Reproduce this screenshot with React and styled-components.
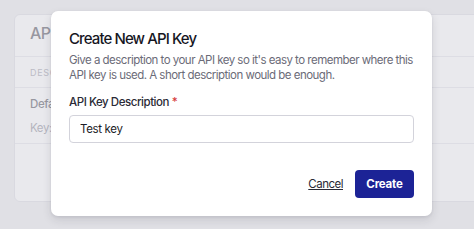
import React from 'react'
import styled, { createGlobalStyle } from 'styled-components'

const GlobalStyle = createGlobalStyle`
  html, body {
    margin: 0;
    padding: 0;
    font-family: Inter, "Noto Sans", sans-serif;
  }
  * { box-sizing: border-box; }
`

const App = () => {
  return (
    <Page>
      <GlobalStyle />
      <Card>
        <CardTitle>API Keys</CardTitle>
        <TableHead>Description</TableHead>
        <TableRow>
          <RowName>Default</RowName>
          <RowKey>Key: sk_live_••••••••</RowKey>
        </TableRow>
      </Card>
      <Overlay>
        <Modal>
          <ModalTitle>Create New API Key</ModalTitle>
          <ModalText>
            Give a description to your API key so it's easy to remember where this
            API key is used. A short description would be enough.
          </ModalText>
          <Label>
            API Key Description <Required>*</Required>
          </Label>
          <Input defaultValue="Test key" />
          <Footer>
            <LinkButton>Cancel</LinkButton>
            <PrimaryButton>Create</PrimaryButton>
          </Footer>
        </Modal>
      </Overlay>
    </Page>
  )
}

const Page = styled.div`
  position: relative;
  width: 100vw;
  height: 100vh;
  overflow: hidden;
  background-color: #ebebee;
  padding: 14px 0 0 14px;
`

const Card = styled.div`
  width: 480px;
  height: 188px;
  background-color: #fff;
  border: 1px solid #dcdce2;
  border-radius: 6px;
  color: #4b4b55;
`

const CardTitle = styled.div`
  padding: 8px 15px 0;
  height: 41px;
  font-size: 16px;
  line-height: 20px;
  font-weight: 500;
  letter-spacing: -0.5px;
`

const TableHead = styled.div`
  height: 32px;
  padding: 0 15px;
  display: flex;
  align-items: center;
  border-top: 1px solid #e4e4ea;
  border-bottom: 1px solid #e4e4ea;
  font-size: 9px;
  letter-spacing: 0.08em;
  text-transform: uppercase;
  color: #9a9aa6;
`

const TableRow = styled.div`
  height: 56px;
  padding: 8px 15px 0;
  border-bottom: 1px solid #e4e4ea;
  display: flex;
  flex-direction: column;
  gap: 8px;
  font-size: 11.5px;
  line-height: 16px;
  letter-spacing: -0.4px;
`

const RowName = styled.div`
  font-weight: 500;
`

const RowKey = styled.div`
  color: #8a8a96;
`

const Overlay = styled.div`
  position: absolute;
  inset: 0;
  background-color: rgba(215, 215, 222, 0.55);
  display: flex;
  align-items: flex-start;
  padding: 11px 0 0 51px;
`

const Modal = styled.div`
  width: 381px;
  background-color: #fff;
  border-radius: 7px;
  padding: 18px;
  box-shadow: 0 4px 10px rgba(30, 30, 50, 0.12), 0 1px 3px rgba(30, 30, 50, 0.08);
  display: flex;
  flex-direction: column;
`

const ModalTitle = styled.h2`
  margin: 0;
  font-size: 15px;
  line-height: 20px;
  font-weight: 500;
  letter-spacing: -0.9px;
  color: #16161f;
`

const ModalText = styled.p`
  margin: 4px 0 0;
  font-size: 11.5px;
  line-height: 14.5px;
  letter-spacing: -0.52px;
  color: #6b6b78;
`

const Label = styled.label`
  margin-top: 12px;
  font-size: 11.5px;
  line-height: 16px;
  font-weight: 500;
  letter-spacing: -0.45px;
  color: #2a2a36;
`

const Required = styled.span`
  color: #d63a3a;
`

const Input = styled.input`
  margin-top: 5px;
  height: 28px;
  width: 100%;
  padding: 0 10px;
  border: 1px solid #d3d3db;
  border-radius: 4px;
  font-family: inherit;
  font-size: 11.5px;
  letter-spacing: -0.35px;
  color: #1c1c26;
  outline: none;
`

const Footer = styled.div`
  margin-top: 27px;
  display: flex;
  justify-content: flex-end;
  align-items: center;
  gap: 12px;
`

const LinkButton = styled.button`
  border: none;
  background: none;
  padding: 0;
  font-family: inherit;
  font-size: 11.5px;
  letter-spacing: -0.5px;
  color: #2a2a36;
  text-decoration: underline;
  cursor: pointer;
`

const PrimaryButton = styled.button`
  height: 28px;
  width: 59px;
  border: none;
  border-radius: 4px;
  background-color: #1c2396;
  color: #fff;
  font-family: inherit;
  font-size: 11.5px;
  font-weight: 700;
  letter-spacing: -0.2px;
  cursor: pointer;
`

export default App
